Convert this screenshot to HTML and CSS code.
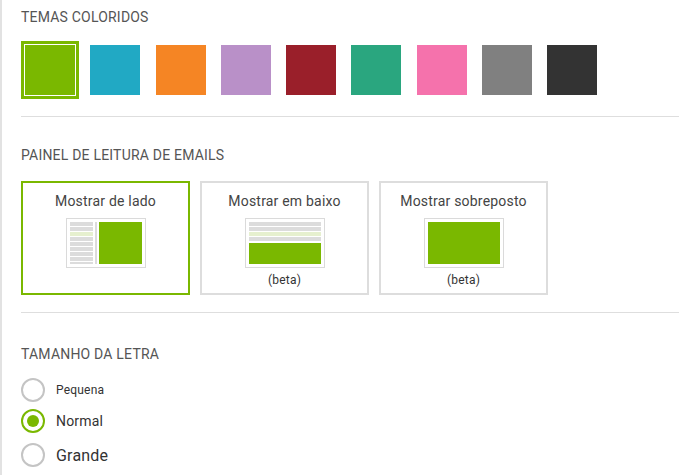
FILE: index.html
```html
<!DOCTYPE html>
<html lang="pt">
<head>
<meta charset="utf-8">
<link rel="stylesheet" href="styles.css">
</head>
<body>
<div class="settings">
  <section class="section themes">
    <h2 class="heading">TEMAS COLORIDOS</h2>
    <div class="swatches">
      <span class="swatch selected" style="background:#7ab800"></span>
      <span class="swatch" style="background:#21a9c4"></span>
      <span class="swatch" style="background:#f58524"></span>
      <span class="swatch" style="background:#b990c8"></span>
      <span class="swatch" style="background:#9a1f2a"></span>
      <span class="swatch" style="background:#2aa67f"></span>
      <span class="swatch" style="background:#f572ac"></span>
      <span class="swatch" style="background:#808080"></span>
      <span class="swatch" style="background:#333333"></span>
    </div>
  </section>
  <hr class="sep sep1">
  <section class="section reading">
    <h2 class="heading">PAINEL DE LEITURA DE EMAILS</h2>
    <div class="cards">
      <div class="card active">
        <div class="card-title">Mostrar de lado</div>
        <div class="thumb thumb-side">
          <div class="list">
            <i></i><i></i><i class="hl"></i><i></i><i></i><i></i><i></i><i></i><i class="last"></i>
          </div>
          <div class="divider"></div>
          <div class="pane"></div>
        </div>
      </div>
      <div class="card">
        <div class="card-title">Mostrar em baixo</div>
        <div class="thumb thumb-below">
          <div class="rows">
            <i></i><i></i><i class="hl"></i><i></i>
          </div>
          <div class="pane"></div>
        </div>
        <div class="beta">(beta)</div>
      </div>
      <div class="card">
        <div class="card-title">Mostrar sobreposto</div>
        <div class="thumb thumb-over">
          <div class="pane"></div>
        </div>
        <div class="beta">(beta)</div>
      </div>
    </div>
  </section>
  <hr class="sep sep2">
  <section class="section fontsize">
    <h2 class="heading">TAMANHO DA LETRA</h2>
    <div class="radios">
      <label class="radio small"><span class="circle"></span><span class="lbl">Pequena</span></label>
      <label class="radio medium checked"><span class="circle"></span><span class="lbl">Normal</span></label>
      <label class="radio large"><span class="circle"></span><span class="lbl">Grande</span></label>
    </div>
  </section>
</div>
</body>
</html>
```

FILE: styles.css
```css
* { box-sizing: border-box; }
html, body { margin: 0; padding: 0; background: #fff; }
body {
  font-family: Roboto, "Liberation Sans", Arial, sans-serif;
  color: #444;
  letter-spacing: 0.2px;
}
.settings {
  border-left: 2px solid #e2e2e2;
  min-height: 475px;
  padding: 9px 19px 0 19px;
}
.heading {
  margin: 0;
  font-size: 14px;
  line-height: 16px;
  font-weight: 400;
  color: #555;
}
.swatches {
  display: flex;
  gap: 15.3px;
  margin-top: 20px;
  padding-left: 4px;
}
.swatch {
  display: block;
  width: 50px;
  height: 50px;
  flex: none;
}
.swatch.selected {
  box-shadow: 0 0 0 1px #fff, 0 0 0 4px #7ab800;
}
.sep {
  border: 0;
  height: 1px;
  background: #dedede;
  margin: 0;
}
.sep1 { margin-top: 21px; }
.reading { margin-top: 30px; }
.cards {
  display: flex;
  gap: 10px;
  margin-top: 18px;
}
.card {
  width: 169px;
  height: 114px;
  border: 2px solid #dddddd;
  padding-top: 10px;
  display: flex;
  flex-direction: column;
  align-items: center;
}
.card.active { border-color: #7ab800; }
.card-title {
  font-size: 14px;
  line-height: 16px;
  color: #444;
}
.thumb {
  margin-top: 9px;
  width: 80px;
  height: 50px;
  border: 1px solid #dadada;
  padding: 3px;
  display: flex;
}
.thumb .pane { background: #7ab800; }
.thumb-side .list {
  width: 23px;
  display: flex;
  flex-direction: column;
  gap: 1px;
  overflow: hidden;
}
.thumb i {
  display: block;
  height: 4px;
  background: #dcdcdc;
  flex: none;
}
.thumb i.hl { background: #e6f0cf; }
.thumb-side .list i.last { height: 2px; }
.thumb-side .divider {
  width: 2px;
  background: #dcdcdc;
  margin: 0 2px;
}
.thumb-side .pane { flex: 1; margin-left: 0; }
.thumb-below { flex-direction: column; }
.thumb-below .rows { display: flex; flex-direction: column; gap: 1px; }
.thumb-below .pane { flex: 1; margin-top: 2px; }
.thumb-over .pane { flex: 1; }
.beta {
  margin-top: 5px;
  font-size: 12px;
  line-height: 14px;
  color: #333;
}
.sep2 { margin-top: 17px; }
.fontsize { margin-top: 33px; }
.radios {
  margin-top: 16px;
  display: flex;
  flex-direction: column;
  gap: 8px;
}
.radio {
  display: flex;
  align-items: center;
  gap: 11px;
  height: 24px;
  color: #333;
}
.circle {
  width: 24px;
  height: 24px;
  border-radius: 50%;
  border: 2px solid #c4c4c4;
  flex: none;
  display: flex;
  align-items: center;
  justify-content: center;
}
.radio.checked .circle { border-color: #7ab800; }
.radio.checked .circle::after {
  content: "";
  width: 12px;
  height: 12px;
  border-radius: 50%;
  background: #7ab800;
}
.small .lbl { font-size: 12px; }
.medium .lbl { font-size: 14px; }
.large .lbl { font-size: 16px; }
.radio.medium { margin-top: -1px; }
.radio.large { margin-top: 2px; }
```
